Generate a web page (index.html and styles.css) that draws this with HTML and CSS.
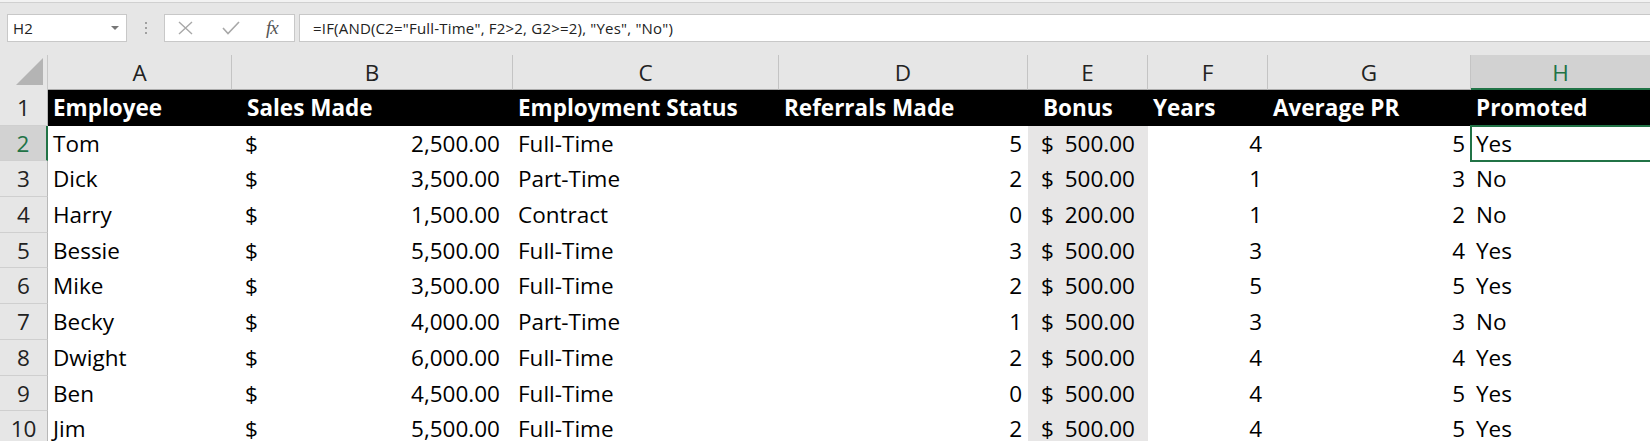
FILE: index.html
```html
<!DOCTYPE html>
<html>
<head>
<meta charset="utf-8">
<link rel="stylesheet" href="styles.css">
</head>
<body>
<div class="topline"></div>
<div class="fbar">
  <div class="namebox"><span>H2</span><svg class="dd" width="8" height="5" viewBox="0 0 8 5"><path d="M0 0 L8 0 L4 4 Z" fill="#777"/></svg></div>
  <div class="grip"><i></i><i></i><i></i></div>
  <div class="btns">
    <svg class="ico" width="16" height="14" viewBox="0 0 16 14"><path d="M1 1 L14 13 M14 1 L1 13" stroke="#a8a8a8" stroke-width="1.4" fill="none"/></svg>
    <svg class="ico chk" width="18" height="14" viewBox="0 0 18 14"><path d="M1 7 L6 12.5 L17 1" stroke="#a8a8a8" stroke-width="1.6" fill="none"/></svg>
    <span class="fx">fx</span>
  </div>
  <div class="formula">=IF(AND(C2="Full-Time", F2&gt;2, G2&gt;=2), "Yes", "No")</div>
</div>
<div class="sheet">
  <div class="corner"><svg width="28" height="28" viewBox="0 0 28 28"><path d="M27 0 L27 27 L0 27 Z" fill="#b4b4b4"/></svg></div>
  <div class="ch">A</div><div class="ch">B</div><div class="ch">C</div><div class="ch">D</div><div class="ch">E</div><div class="ch">F</div><div class="ch">G</div><div class="ch sel">H</div>

  <div class="rh">1</div>
  <div class="c hd">Employee</div><div class="c hd ind">Sales Made</div><div class="c hd">Employment Status</div><div class="c hd">Referrals Made</div><div class="c hd ind">Bonus</div><div class="c hd">Years</div><div class="c hd">Average PR</div><div class="c hd">Promoted</div>

  <div class="rh sel">2</div>
  <div class="c">Tom</div><div class="c acct"><span>$</span><span>2,500.00</span></div><div class="c">Full-Time</div><div class="c r">5</div><div class="c acct sh"><span>$</span><span>500.00</span></div><div class="c r">4</div><div class="c r">5</div><div class="c active">Yes</div>

  <div class="rh">3</div>
  <div class="c">Dick</div><div class="c acct"><span>$</span><span>3,500.00</span></div><div class="c">Part-Time</div><div class="c r">2</div><div class="c acct sh"><span>$</span><span>500.00</span></div><div class="c r">1</div><div class="c r">3</div><div class="c">No</div>

  <div class="rh">4</div>
  <div class="c">Harry</div><div class="c acct"><span>$</span><span>1,500.00</span></div><div class="c">Contract</div><div class="c r">0</div><div class="c acct sh"><span>$</span><span>200.00</span></div><div class="c r">1</div><div class="c r">2</div><div class="c">No</div>

  <div class="rh">5</div>
  <div class="c">Bessie</div><div class="c acct"><span>$</span><span>5,500.00</span></div><div class="c">Full-Time</div><div class="c r">3</div><div class="c acct sh"><span>$</span><span>500.00</span></div><div class="c r">3</div><div class="c r">4</div><div class="c">Yes</div>

  <div class="rh">6</div>
  <div class="c">Mike</div><div class="c acct"><span>$</span><span>3,500.00</span></div><div class="c">Full-Time</div><div class="c r">2</div><div class="c acct sh"><span>$</span><span>500.00</span></div><div class="c r">5</div><div class="c r">5</div><div class="c">Yes</div>

  <div class="rh">7</div>
  <div class="c">Becky</div><div class="c acct"><span>$</span><span>4,000.00</span></div><div class="c">Part-Time</div><div class="c r">1</div><div class="c acct sh"><span>$</span><span>500.00</span></div><div class="c r">3</div><div class="c r">3</div><div class="c">No</div>

  <div class="rh">8</div>
  <div class="c">Dwight</div><div class="c acct"><span>$</span><span>6,000.00</span></div><div class="c">Full-Time</div><div class="c r">2</div><div class="c acct sh"><span>$</span><span>500.00</span></div><div class="c r">4</div><div class="c r">4</div><div class="c">Yes</div>

  <div class="rh">9</div>
  <div class="c">Ben</div><div class="c acct"><span>$</span><span>4,500.00</span></div><div class="c">Full-Time</div><div class="c r">0</div><div class="c acct sh"><span>$</span><span>500.00</span></div><div class="c r">4</div><div class="c r">5</div><div class="c">Yes</div>

  <div class="rh">10</div>
  <div class="c">Jim</div><div class="c acct"><span>$</span><span>5,500.00</span></div><div class="c">Full-Time</div><div class="c r">2</div><div class="c acct sh"><span>$</span><span>500.00</span></div><div class="c r">4</div><div class="c r">5</div><div class="c">Yes</div>
</div>
</body>
</html>
```
FILE: styles.css
```css
html, body {
  margin: 0;
  padding: 0;
  background: #e6e6e6;
  overflow: hidden;
  width: 1650px;
  height: 441px;
}

.topline {
  height: 2px;
  background: #f2f2f2;
  border-bottom: 1px solid #d0d0d0;
}

.fbar {
  display: flex;
  align-items: stretch;
  height: 28px;
  margin-top: 11px;
  padding-left: 7px;
  margin-bottom: 13px;
  font-family: "Open Sans", sans-serif;
  font-size: 15px;
  letter-spacing: 0.2px;
  color: #222;
}

.namebox {
  background: #fff;
  border: 1px solid #c8c8c8;
  display: flex;
  align-items: center;
  justify-content: space-between;
  padding: 0 7px 0 5px;
  box-sizing: border-box;
  width: 120px;
}

.grip {
  width: 37px;
  display: flex;
  flex-direction: column;
  align-items: center;
  justify-content: center;
  gap: 3px;
}
.grip i {
  display: block;
  width: 2px;
  height: 2px;
  background: #a0a0a0;
}

.btns {
  width: 131px;
  box-sizing: border-box;
  background: #fff;
  border: 1px solid #c8c8c8;
  display: flex;
  align-items: center;
  padding-left: 13px;
  gap: 26px;
}
.btns .chk { margin-left: 2px; }

.fx {
  font-family: "Liberation Serif", serif;
  font-style: italic;
  font-size: 19px;
  color: #555;
  letter-spacing: -1px;
  margin-left: 0px;
}

.formula {
  flex: 1;
  margin-left: 4px;
  background: #fff;
  border: 1px solid #c8c8c8;
  border-right: none;
  display: flex;
  align-items: center;
  padding-left: 13px;
  white-space: nowrap;
}

.sheet {
  display: grid;
  grid-template-columns: 48px 184px 281px 266px 249px 120px 120px 203px 1fr;
  grid-template-rows: 35px;
  grid-auto-rows: 35.7px;
  background: #fff;
  font-family: "Open Sans", "Liberation Sans", sans-serif;
  font-size: 22.5px;
  color: #000;
}

.corner {
  background: #e6e6e6;
  border-right: 1px solid #c8c8c8;
  display: flex;
  align-items: flex-end;
  justify-content: flex-end;
  padding: 0 3px 4px 0;
}

.ch {
  background: #e6e6e6;
  border-right: 1px solid #c4c4c4;
  border-bottom: 1px solid #ababab;
  text-align: center;
  line-height: 36px;
  color: #222;
}
.ch.sel {
  background: #d2d2d2;
  color: #217346;
  border-bottom: 2px solid #217346;
  border-right: none;
}

.rh {
  background: #e6e6e6;
  border-bottom: 1px solid #cfcfcf;
  border-right: 1px solid #b8b8b8;
  text-align: center;
  line-height: 35px;
  color: #222;
  box-sizing: border-box;
}
.rh.sel {
  background: #d2d2d2;
  color: #217346;
  border-right: 2px solid #217346;
}

.c {
  line-height: 35.7px;
  padding: 0 5px 0 5px;
  white-space: nowrap;
  overflow: hidden;
}
.c.r { text-align: right; padding-right: 6px; }
.c.hd {
  background: #000;
  color: #fff;
  font-weight: 700;
}
.c.hd.ind { padding-left: 15px; }
.c.acct {
  display: flex;
  justify-content: space-between;
  padding: 0 13px 0 13px;
}
.c.sh { background: #e7e6e6; }

.c.active {
  position: relative;
  overflow: visible;
}
.c.active::after {
  content: "";
  position: absolute;
  left: -1px;
  top: -1px;
  right: -3px;
  bottom: -1px;
  border: 2px solid #217346;
}
```
